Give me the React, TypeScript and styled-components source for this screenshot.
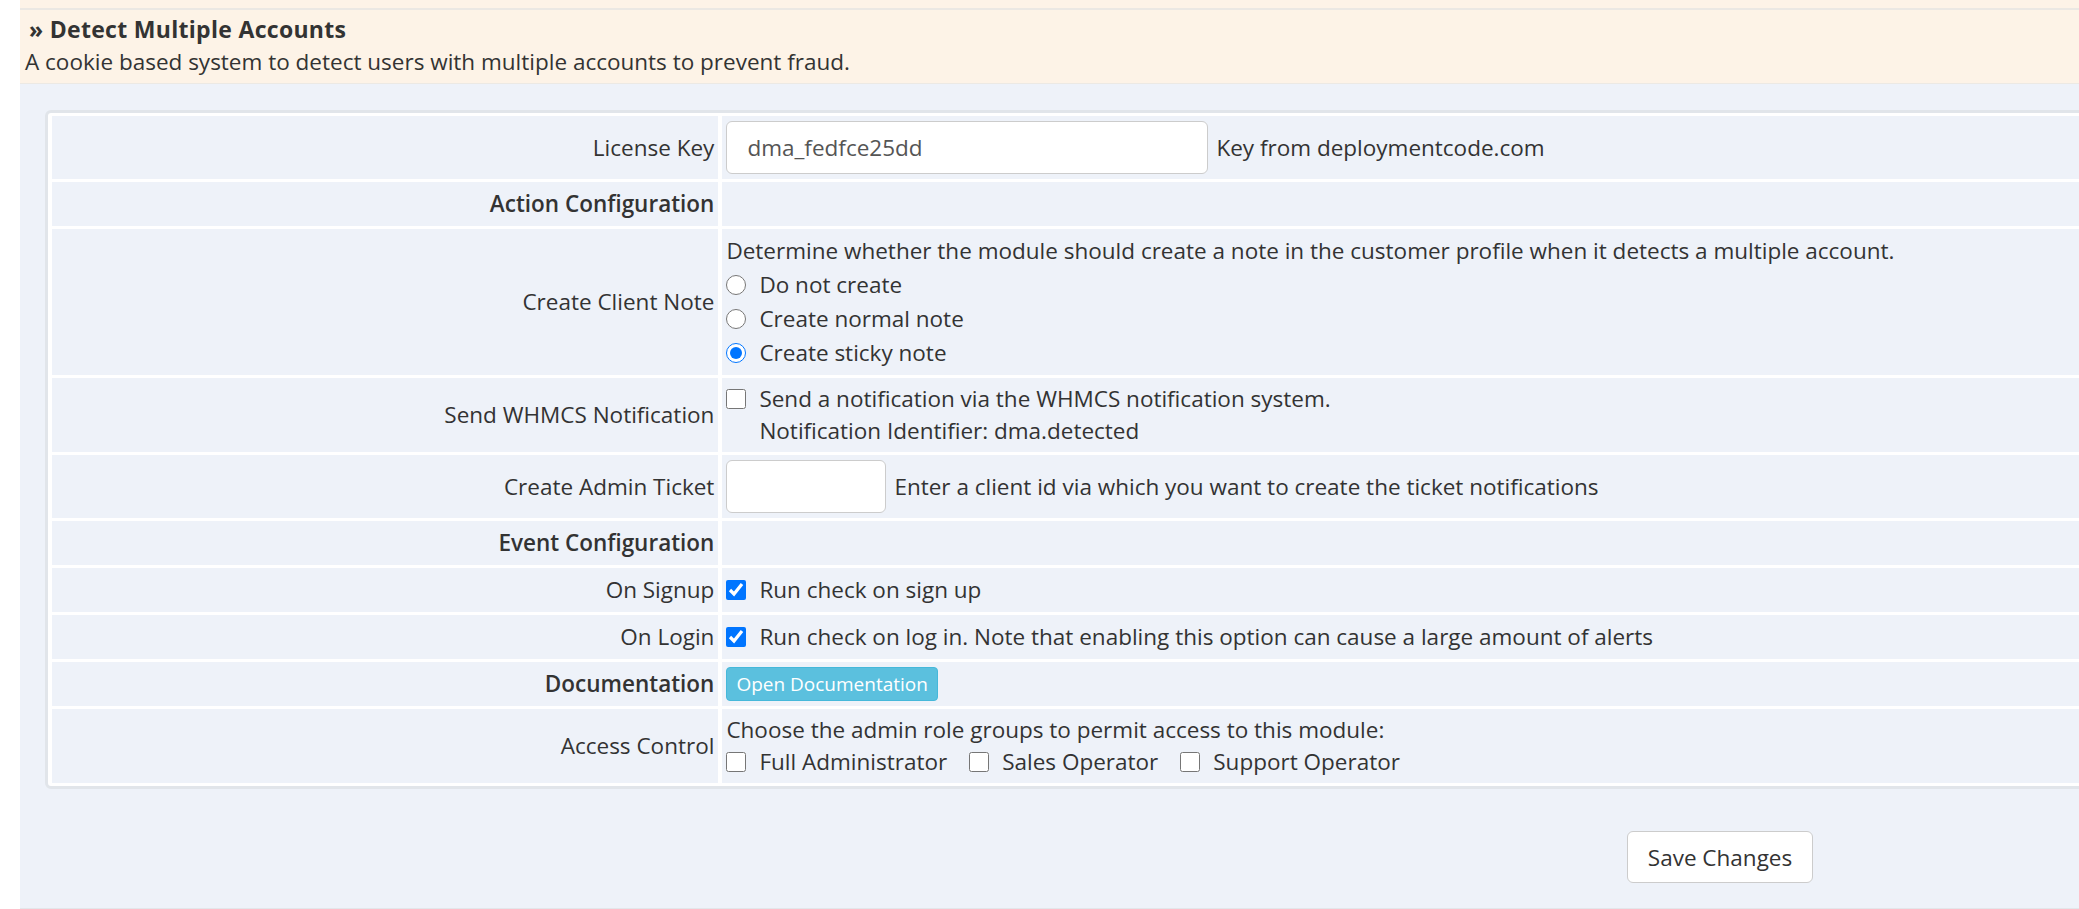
import { createGlobalStyle } from 'styled-components';
import styled from 'styled-components';

const GlobalStyle = createGlobalStyle`
  html, body {
    margin: 0;
    padding: 0;
    background: #ffffff;
    overflow: hidden;
  }
  body {
    font-family: 'Open Sans', 'Liberation Sans', sans-serif;
    font-size: 22.5px;
    color: #333333;
  }
`;

const Page = styled.div`
  width: 3400px;
  margin-left: 20px;
`;

const TopStrip = styled.div`
  height: 8px;
  background: #fdf3e7;
  border-bottom: 2px solid #ebe8e3;
`;

const Header = styled.div`
  background: #fdf3e7;
  padding: 3px 0 5px 5px;
  border-bottom: 1px solid #ece9e4;
`;

const Title = styled.div`
  font-weight: 700;
  font-size: 23px;
  line-height: 33px;
  padding-left: 4px;
  letter-spacing: 0.3px;
`;

const Description = styled.div`
  line-height: 32px;
`;

const Content = styled.div`
  background: #eef2f9;
  padding: 26px 25px 25px;
  border-bottom: 2px solid #e3e6ea;
`;

const Table = styled.table`
  width: 100%;
  background: #ffffff;
  border: 3px solid #e1e5ea;
  border-radius: 6px;
  border-spacing: 4px 3px;
`;

const LabelCell = styled.td<{ $bold?: boolean }>`
  width: 20%;
  background: #eef2f9;
  text-align: right;
  padding: 5px 4px;
  line-height: 34px;
  vertical-align: middle;
  white-space: nowrap;
  font-weight: ${(p) => (p.$bold ? 600 : 400)};
`;

const ValueCell = styled.td<{ $tight?: boolean }>`
  background: #eef2f9;
  padding: 5px 4px;
  line-height: ${(p) => (p.$tight ? '32px' : '34px')};
  vertical-align: middle;
  white-space: nowrap;
`;

const TextInput = styled.input<{ $width: number }>`
  box-sizing: border-box;
  width: ${(p) => p.$width}px;
  height: 53px;
  margin: 0 8px 0 0;
  padding: 0 20px;
  border: 1px solid #cccccc;
  border-radius: 6px;
  background: #ffffff;
  font-family: inherit;
  font-size: 22.5px;
  color: #555555;
  vertical-align: middle;
  outline: none;
`;

const Inline = styled.span`
  vertical-align: middle;
`;

const OptionLine = styled.label`
  display: flex;
  align-items: center;
  gap: 13px;
`;

const Radio = styled.input.attrs({ type: 'radio' })`
  width: 20px;
  height: 20px;
  margin: 0;
  flex: none;
  accent-color: #0075ff;
`;

const Checkbox = styled.input.attrs({ type: 'checkbox' })`
  width: 20px;
  height: 20px;
  margin: 0;
  flex: none;
  accent-color: #0075ff;
`;

const StackedOption = styled.label`
  display: flex;
  align-items: flex-start;
  gap: 13px;

  & > input {
    margin-top: 6px;
  }
`;

const CheckGroup = styled.div`
  display: flex;
  align-items: center;
  gap: 22px;
`;

const InfoButton = styled.button`
  display: block;
  height: 34px;
  padding: 0 9px;
  border: 1px solid #46b8da;
  border-radius: 4px;
  background: #5bc0de;
  color: #ffffff;
  font-family: inherit;
  font-size: 19px;
  cursor: pointer;
`;

const ButtonRow = styled.div`
  display: flex;
  justify-content: center;
  padding: 42px 0 0;
`;

const SaveButton = styled.button`
  height: 52px;
  padding: 0 20px;
  border: 1px solid #cccccc;
  border-radius: 6px;
  background: #ffffff;
  color: #333333;
  font-family: inherit;
  font-size: 22.5px;
  cursor: pointer;
`;

export default function App() {
  return (
    <>
      <GlobalStyle />
      <Page>
        <TopStrip />
        <Header>
          <Title>» Detect Multiple Accounts</Title>
          <Description>
            A cookie based system to detect users with multiple accounts to prevent fraud.
          </Description>
        </Header>
        <Content>
          <Table>
            <tbody>
              <tr>
                <LabelCell>License Key</LabelCell>
                <ValueCell>
                  <TextInput $width={482} defaultValue="dma_fedfce25dd" />
                  <Inline>Key from deploymentcode.com</Inline>
                </ValueCell>
              </tr>
              <tr>
                <LabelCell $bold>Action Configuration</LabelCell>
                <ValueCell />
              </tr>
              <tr>
                <LabelCell>Create Client Note</LabelCell>
                <ValueCell>
                  <div>
                    Determine whether the module should create a note in the customer profile when
                    it detects a multiple account.
                  </div>
                  <OptionLine>
                    <Radio name="note" />
                    Do not create
                  </OptionLine>
                  <OptionLine>
                    <Radio name="note" />
                    Create normal note
                  </OptionLine>
                  <OptionLine>
                    <Radio name="note" defaultChecked />
                    Create sticky note
                  </OptionLine>
                </ValueCell>
              </tr>
              <tr>
                <LabelCell>Send WHMCS Notification</LabelCell>
                <ValueCell $tight>
                  <StackedOption>
                    <Checkbox />
                    <span>
                      Send a notification via the WHMCS notification system.
                      <br />
                      Notification Identifier: dma.detected
                    </span>
                  </StackedOption>
                </ValueCell>
              </tr>
              <tr>
                <LabelCell>Create Admin Ticket</LabelCell>
                <ValueCell>
                  <TextInput $width={160} />
                  <Inline>Enter a client id via which you want to create the ticket notifications</Inline>
                </ValueCell>
              </tr>
              <tr>
                <LabelCell $bold>Event Configuration</LabelCell>
                <ValueCell />
              </tr>
              <tr>
                <LabelCell>On Signup</LabelCell>
                <ValueCell>
                  <OptionLine>
                    <Checkbox defaultChecked />
                    Run check on sign up
                  </OptionLine>
                </ValueCell>
              </tr>
              <tr>
                <LabelCell>On Login</LabelCell>
                <ValueCell>
                  <OptionLine>
                    <Checkbox defaultChecked />
                    Run check on log in. Note that enabling this option can cause a large amount of
                    alerts
                  </OptionLine>
                </ValueCell>
              </tr>
              <tr>
                <LabelCell $bold>Documentation</LabelCell>
                <ValueCell>
                  <InfoButton>Open Documentation</InfoButton>
                </ValueCell>
              </tr>
              <tr>
                <LabelCell>Access Control</LabelCell>
                <ValueCell $tight>
                  <div>Choose the admin role groups to permit access to this module:</div>
                  <CheckGroup>
                    <OptionLine>
                      <Checkbox />
                      Full Administrator
                    </OptionLine>
                    <OptionLine>
                      <Checkbox />
                      Sales Operator
                    </OptionLine>
                    <OptionLine>
                      <Checkbox />
                      Support Operator
                    </OptionLine>
                  </CheckGroup>
                </ValueCell>
              </tr>
            </tbody>
          </Table>
          <ButtonRow>
            <SaveButton>Save Changes</SaveButton>
          </ButtonRow>
        </Content>
      </Page>
    </>
  );
}
